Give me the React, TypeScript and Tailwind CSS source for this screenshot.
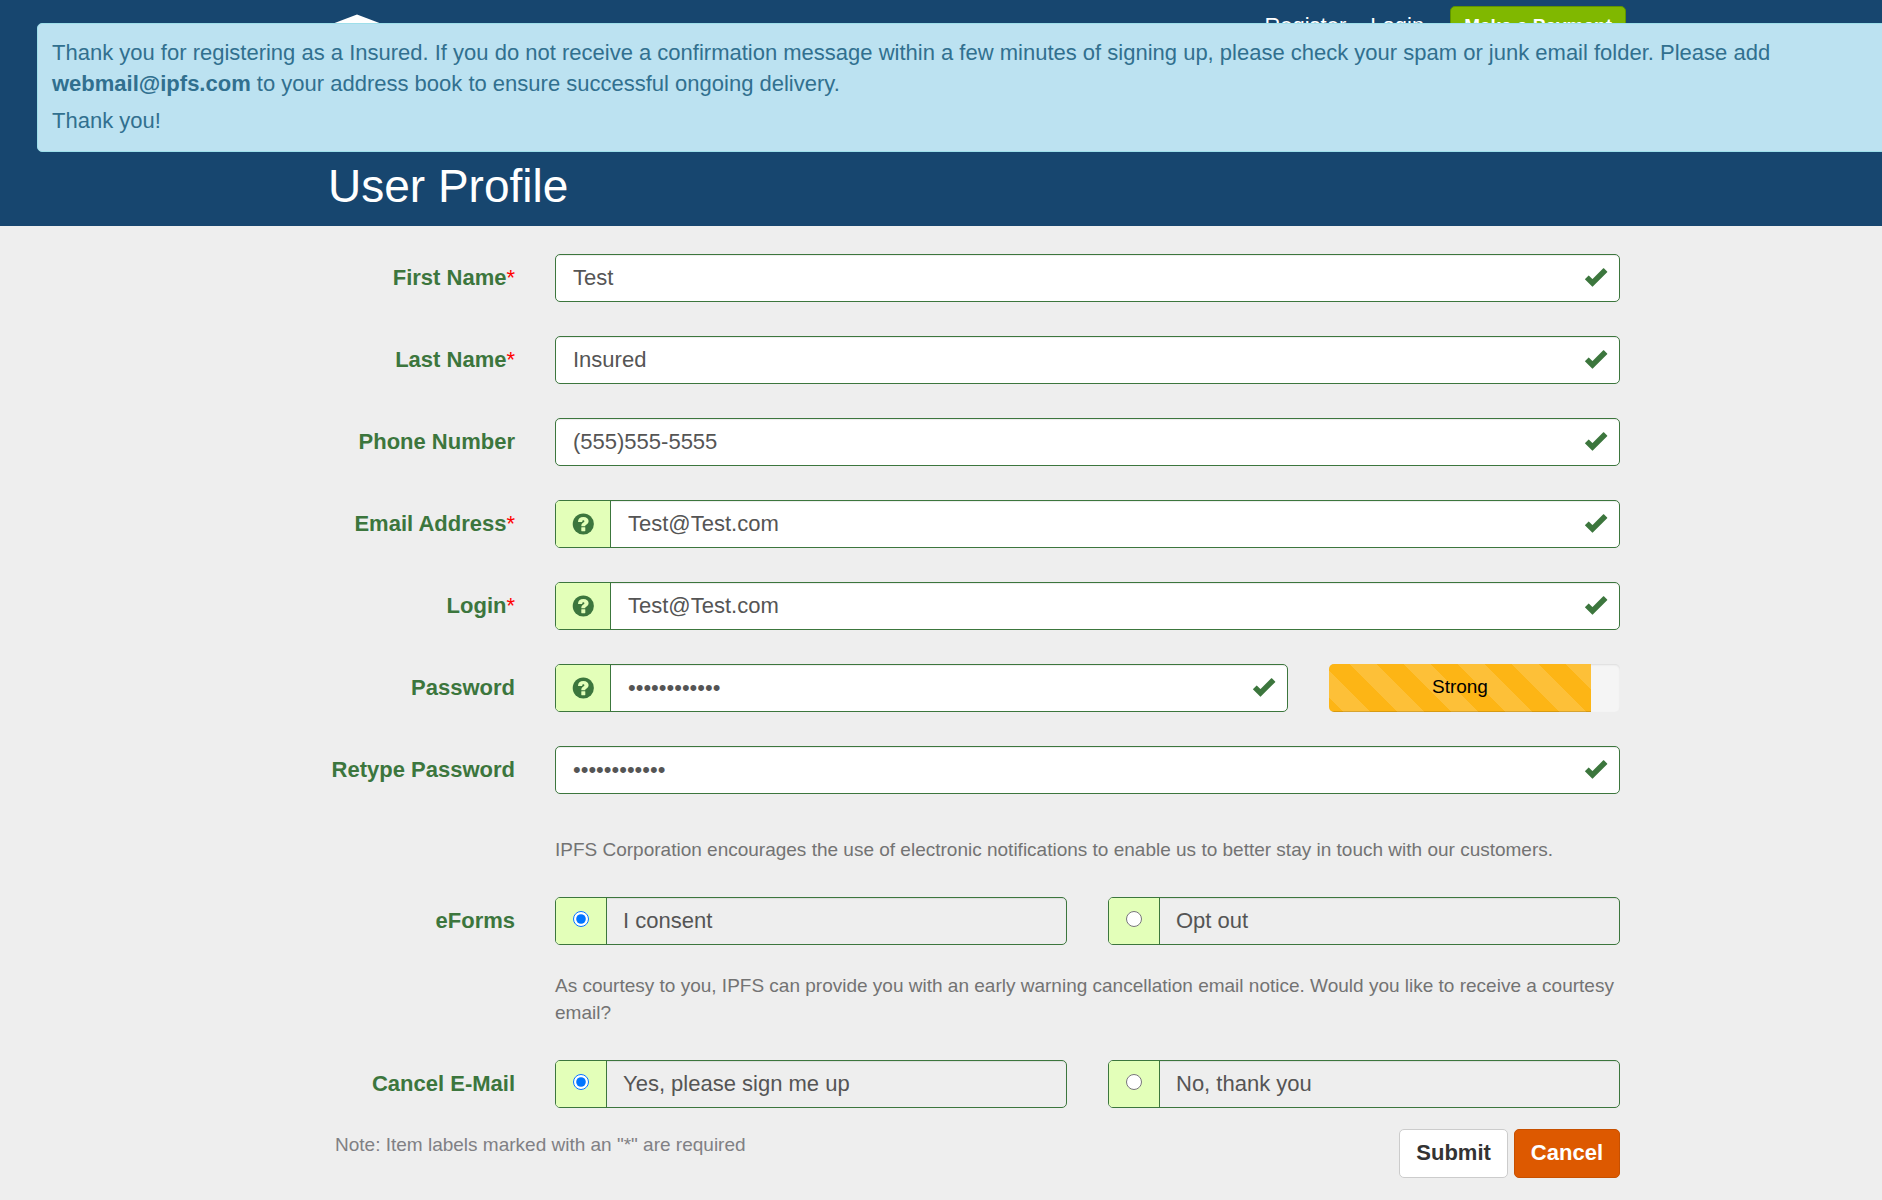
import React, { useId, useState } from 'react';

const CheckIcon = () => (
  <svg viewBox="0 0 1280 1200" className="h-[22px] w-6 fill-[#3c763d]" aria-hidden="true">
    <g transform="matrix(1 0 0 -1 0 1120)">
      <path d="M465 477l571 571q8 8 18 8t17 -8l177 -177q8 -7 8 -17t-8 -18l-783 -784q-7 -8 -17.5 -8t-17.5 8l-384 384q-8 8 -8 18t8 17l177 177q7 8 17 8t18 -8l171 -171q7 -7 18 -7t18 7z" />
    </g>
  </svg>
);

const QuestionIcon = () => (
  <svg viewBox="0 0 22 22" className="size-[22px]" aria-hidden="true">
    <circle cx="11.3" cy="11" r="10.6" fill="#3c763d" />
    <path
      d="M6 9C6 5.6 8 3.9 11.4 3.9c3.2 0 5.2 1.6 5.2 4.2 0 1.9-1 2.9-2.3 3.7-.8.5-1.1.8-1.1 1.5H9.3c0-2.2.6-2.9 2-3.8.7-.5 1.1-.8 1.1-1.3 0-.6-.4-.9-1-.9-.9 0-1.2.6-1.2 1.7z"
      fill="#e3ffb9"
    />
    <rect x="9.3" y="14.2" width="4" height="4" rx="0.4" fill="#e3ffb9" />
  </svg>
);

type FieldProps = {
  label: string;
  value: string;
  type?: string;
  required?: boolean;
  help?: boolean;
  children?: React.ReactNode;
};

const labelClass =
  'w-[187px] shrink-0 pt-2 text-right text-[22px] leading-8 font-bold whitespace-nowrap text-[#3c763d]';

function Field({ label, value, type = 'text', required, help, children }: FieldProps) {
  const id = useId();
  const [text, setText] = useState(value);
  return (
    <div className="flex gap-10">
      <label htmlFor={id} className={labelClass}>
        {label}
        {required && <span className="font-normal text-[#ff0000]">*</span>}
      </label>
      <div className="flex min-w-0 flex-1 gap-[41px]">
        <div className="flex h-12 min-w-0 flex-1 items-center rounded-[5px] border border-[#3c763d] bg-white shadow-[inset_0_1px_1px_rgba(0,0,0,0.075)]">
          {help && (
            <button
              type="button"
              aria-label={`Help for ${label}`}
              className="flex h-full w-[55px] shrink-0 items-center justify-center rounded-l-[4px] border-r border-[#3c763d] bg-[#e3ffb9]"
            >
              <QuestionIcon />
            </button>
          )}
          <input
            id={id}
            type={type}
            value={text}
            onChange={(e) => setText(e.target.value)}
            className="h-full min-w-0 flex-1 bg-transparent px-[17px] text-[22px] text-[#555] outline-none"
          />
          <span className="mr-[11px] shrink-0">
            <CheckIcon />
          </span>
        </div>
        {children}
      </div>
    </div>
  );
}

function StrengthMeter() {
  const percent = 90;
  return (
    <div
      role="progressbar"
      aria-valuenow={percent}
      aria-label="Password strength"
      className="h-12 w-[291px] shrink-0 overflow-hidden rounded-[5px] bg-[#f5f5f5] shadow-[inset_0_1px_2px_rgba(0,0,0,0.1)]"
    >
      <div
        style={{ width: `${percent}%` }}
        className="flex h-full items-center justify-center bg-[#fdb515] bg-[linear-gradient(45deg,rgba(255,255,255,0.15)_25%,transparent_25%,transparent_50%,rgba(255,255,255,0.15)_50%,rgba(255,255,255,0.15)_75%,transparent_75%,transparent)] bg-[length:54px_54px] bg-[position:21px_0px] pb-0.5 text-[19px] text-black shadow-[inset_0_-1px_0_rgba(0,0,0,0.15)]"
      >
        Strong
      </div>
    </div>
  );
}

function Choices({ label, name, options }: { label: string; name: string; options: string[] }) {
  const [picked, setPicked] = useState(options[0]);
  return (
    <div role="radiogroup" aria-label={label} className="flex gap-10">
      <span className={labelClass}>{label}</span>
      <div className="grid min-w-0 flex-1 grid-cols-2 gap-[41px]">
        {options.map((option) => (
          <label
            key={option}
            className="flex h-12 items-center rounded-[5px] border border-[#3c763d] text-[22px] text-[#555] shadow-[inset_0_1px_1px_rgba(0,0,0,0.075)]"
          >
            <span className="flex h-full w-[51px] shrink-0 items-center justify-center rounded-l-[4px] border-r border-[#3c763d] bg-[#e3ffb9] pb-1">
              <input
                type="radio"
                name={name}
                checked={picked === option}
                onChange={() => setPicked(option)}
                className="size-4"
              />
            </span>
            <span className="px-4 pb-0.5">{option}</span>
          </label>
        ))}
      </div>
    </div>
  );
}

export default function App() {
  return (
    <div className="min-h-screen overflow-hidden bg-[#eee] font-['Liberation_Sans',Arial,sans-serif]">
      <div className="relative w-[calc(100%+72px)]">
        <header className="bg-[#17466f] text-white">
          <div className="mx-auto flex max-w-[1298px] flex-col">
            <div className="flex items-start justify-between pt-1.5">
              <svg viewBox="0 0 60 60" className="mt-2 size-[60px]" aria-hidden="true">
                <path d="M29 0.4L58 11.4v30L29 53 0 41.4v-30z" fill="#fff" />
              </svg>
              <nav className="flex items-start text-[22px] leading-8">
                <a href="#register" className="mr-6 pt-1">Register</a>
                <a href="#login" className="mr-[26px] pt-1">Login</a>
                <a
                  href="#payment"
                  className="rounded-[5px] border border-[#5f9400] bg-[#80b800] px-[13px] py-[3px] text-[19px] font-bold"
                >
                  Make a Payment
                </a>
              </nav>
            </div>
            <h1 className="mt-[83px] pb-[11px] text-[46px] leading-[58px]">User Profile</h1>
          </div>
        </header>

        <div
          role="alert"
          className="absolute top-[23px] right-0 left-[37px] rounded-[5px] border border-[#9edfea] bg-[#bce2f1] px-3.5 pt-[13px] pb-[15px] text-[22px] leading-[31px] text-[#31708f]"
        >
          <p className="pr-40">
            Thank you for registering as a Insured. If you do not receive a confirmation message within a few minutes of
            signing up, please check your spam or junk email folder. Please add <strong>webmail@ipfs.com</strong> to your
            address book to ensure successful ongoing delivery.
          </p>
          <p className="mt-1.5">Thank you!</p>
        </div>

        <main className="mx-auto max-w-[1298px] pt-7 pr-1.5 pb-5">
          <form onSubmit={(e) => e.preventDefault()}>
            <div className="flex flex-col gap-[34px]">
              <Field label="First Name" value="Test" required />
              <Field label="Last Name" value="Insured" required />
              <Field label="Phone Number" value="(555)555-5555" />
              <Field label="Email Address" value="Test@Test.com" required help />
              <Field label="Login" value="Test@Test.com" required help />
              <Field label="Password" value="password1234" type="password" help>
                <StrengthMeter />
              </Field>
              <Field label="Retype Password" value="password1234" type="password" />
            </div>
            <p className="mt-[42px] mb-[34px] ml-[227px] text-[19px] leading-[27px] text-[#737373]">
              IPFS Corporation encourages the use of electronic notifications to enable us to better stay in touch with
              our customers.
            </p>
            <Choices label="eForms" name="eforms" options={['I consent', 'Opt out']} />
            <p className="mt-[27px] mb-[34px] ml-[227px] text-[19px] leading-[27px] text-[#737373]">
              As courtesy to you, IPFS can provide you with an early warning cancellation email notice. Would you like to
              receive a courtesy email?
            </p>
            <Choices label="Cancel E-Mail" name="cancel" options={['Yes, please sign me up', 'No, thank you']} />
            <div className="mt-[21px] flex items-start justify-between pl-[7px]">
              <p className="pt-0.5 text-[19px] leading-[27px] text-[#808084]">
                Note: Item labels marked with an "*" are required
              </p>
              <div className="flex gap-1.5 text-[22px] leading-[31px] font-bold">
                <button
                  type="submit"
                  className="rounded-[5px] border border-[#ccc] bg-white px-4 pt-[7px] pb-[9px] text-[#333]"
                >
                  Submit
                </button>
                <button
                  type="button"
                  className="rounded-[5px] border border-[#c75000] bg-[#dd5900] px-4 pt-[7px] pb-[9px] text-white"
                >
                  Cancel
                </button>
              </div>
            </div>
          </form>
        </main>
      </div>
    </div>
  );
}
